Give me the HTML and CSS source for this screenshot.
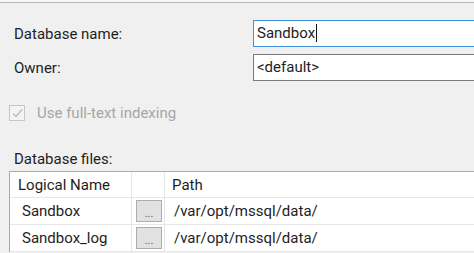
FILE: index.html
```html
<!DOCTYPE html>
<html lang="en">
<head>
  <meta charset="UTF-8">
  <title>New Database</title>
  <link rel="stylesheet" href="styles.css">
</head>
<body>
  <div class="top-rule"></div>

  <!-- General page -->
  <div class="form">
    <div class="field-row">
      <label class="field-label">Database name:</label>
      <div class="textbox focused"><span class="caret">Sandbox</span></div>
    </div>
    <div class="field-row">
      <label class="field-label">Owner:</label>
      <div class="textbox">&lt;default&gt;</div>
    </div>
  </div>

  <div class="check-row">
    <span class="checkbox">
      <svg width="13" height="13" viewBox="0 0 13 13">
        <path d="M2 6.5 L5 9.5 L11 2.5" fill="none" stroke="#bdbdbd" stroke-width="1.4"/>
      </svg>
    </span>
    <span class="check-label">Use full-text indexing</span>
  </div>

  <div class="files-label">Database files:</div>

  <div class="files-grid">
    <div class="cell head">Logical Name</div>
    <div class="cell head"></div>
    <div class="cell head path">Path</div>

    <div class="cell">Sandbox</div>
    <div class="cell btn-cell"><span class="dots">...</span></div>
    <div class="cell path">/var/opt/mssql/data/</div>

    <div class="cell">Sandbox_log</div>
    <div class="cell btn-cell"><span class="dots">...</span></div>
    <div class="cell path">/var/opt/mssql/data/</div>
  </div>
</body>
</html>
```

FILE: styles.css
```css
body {
  margin: 0;
  height: 253px;
  overflow: hidden;
  background-color: #f0f0f0;
  font-family: Roboto, "Noto Sans", sans-serif;
  font-size: 15px;
  color: #1e1e1e;
}

.top-rule {
  height: 2px;
  background-color: #f7f7f7;
  border-bottom: 1px solid #b4b4b4;
}

.form {
  display: grid;
  row-gap: 7px;
  margin-top: 17px;
  padding-left: 14px;
}

.field-row {
  display: grid;
  grid-template-columns: 239px 1fr;
  align-items: center;
}

/* right edge runs off the window in the original */
.textbox {
  height: 25px;
  line-height: 25px;
  padding-left: 3px;
  background-color: white;
  border: 1px solid #7a7a7a;
  border-right: none;
}

.textbox.focused {
  border-color: #3e8fd8;
}

.caret {
  border-right: 1px solid #111;
  padding-right: 1px;
}

.check-row {
  display: flex;
  align-items: center;
  margin-top: 23px;
  padding-left: 9px;
}

.checkbox {
  display: flex;
  align-items: center;
  justify-content: center;
  width: 14px;
  height: 14px;
  border: 1px solid #c6c6c6;
  background-color: #f4f4f4;
}

.check-label {
  margin-left: 12px;
  color: #a6a6a6;
}

.files-label {
  margin-top: 28px;
  padding-left: 14px;
}

.files-grid {
  display: grid;
  grid-template-columns: 122px 33px 1fr;
  grid-template-rows: 26px 27px 27px;
  margin-top: 3px;
  margin-left: 9px;
  background-color: white;
  border-top: 1px solid #a9a9a9;
  border-left: 1px solid #a9a9a9;
}

.cell {
  display: flex;
  align-items: center;
  padding-left: 12px;
  border-right: 1px solid #e6e6e6;
  border-bottom: 1px solid #e6e6e6;
  white-space: nowrap;
}

.cell.head {
  padding-left: 8px;
}

.cell.path {
  padding-left: 9px;
  border-right: none;
}

.cell.head.path {
  padding-left: 7px;
}

.btn-cell {
  padding-left: 4px;
}

.dots {
  display: flex;
  align-items: flex-end;
  justify-content: center;
  width: 24px;
  height: 20px;
  background-color: #e1e1e1;
  border: 1px solid #adadad;
  color: #555;
  font-size: 11px;
  line-height: 14px;
}
```
